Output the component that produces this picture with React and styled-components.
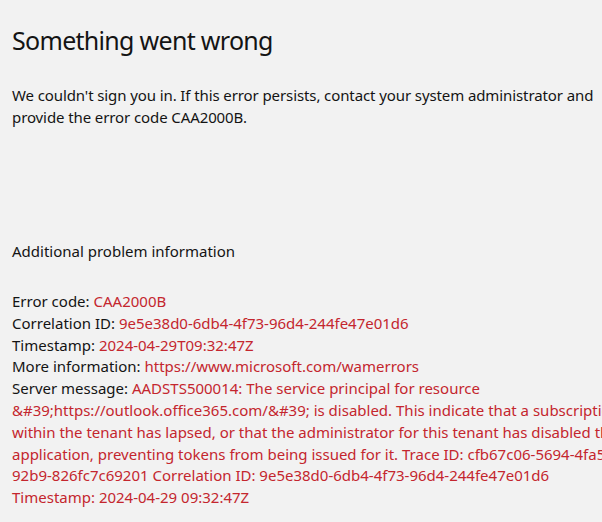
import React from "react";
import styled, { createGlobalStyle } from "styled-components";

const GlobalStyle = createGlobalStyle`
  html, body {
    margin: 0;
    padding: 0;
    background: #f2f2f2;
    overflow: hidden;
  }
`;

const details = [
  { label: "Error code:", value: "CAA2000B" },
  { label: "Correlation ID:", value: "9e5e38d0-6db4-4f73-96d4-244fe47e01d6" },
  { label: "Timestamp:", value: "2024-04-29T09:32:47Z" },
  { label: "More information:", value: "https://www.microsoft.com/wamerrors" },
];

const serverMessage = [
  "&#39;https://outlook.office365.com/&#39; is disabled. This indicate that a subscription",
  "within the tenant has lapsed, or that the administrator for this tenant has disabled the",
  "application, preventing tokens from being issued for it. Trace ID: cfb67c06-5694-4fa5-",
  "92b9-826fc7c69201 Correlation ID: 9e5e38d0-6db4-4f73-96d4-244fe47e01d6",
  "Timestamp: 2024-04-29 09:32:47Z",
];

const App = () => {
  return (
    <Page>
      <GlobalStyle />
      <Title>Something went wrong</Title>
      <Message>
        We couldn't sign you in. If this error persists, contact your system administrator and
        <br />
        provide the error code CAA2000B.
      </Message>

      <SectionTitle>Additional problem information</SectionTitle>

      <Details>
        {details.map((d) => (
          <Line key={d.label}>
            {d.label} <Value>{d.value}</Value>
          </Line>
        ))}
        <Line>
          Server message: <Value>AADSTS500014: The service principal for resource</Value>
        </Line>
        {serverMessage.map((text) => (
          <Line key={text}>
            <Value>{text}</Value>
          </Line>
        ))}
      </Details>
    </Page>
  );
};

const Page = styled.div`
  width: 602px;
  height: 522px;
  box-sizing: border-box;
  padding: 0 12px;
  overflow: hidden;
  background: #f2f2f2;
  color: #141414;
  font-family: "Noto Sans", "Open Sans", sans-serif;
  display: flex;
  flex-direction: column;
`;

const Title = styled.h1`
  margin: 22px 0 0;
  font-size: 25px;
  line-height: 36px;
  font-weight: 400;
  letter-spacing: -0.7px;
  white-space: nowrap;
`;

const Message = styled.p`
  margin: 26px 0 0;
  font-size: 15px;
  line-height: 22px;
  letter-spacing: -0.1px;
  white-space: nowrap;
`;

const SectionTitle = styled.h2`
  margin: 112px 0 0;
  font-size: 15px;
  line-height: 22px;
  font-weight: 400;
  white-space: nowrap;
`;

const Details = styled.div`
  margin-top: 29px;
  font-size: 15px;
  line-height: 21.8px;
`;

const Line = styled.div`
  white-space: nowrap;
`;

const Value = styled.span`
  color: #c4262e;
`;

export default App;
